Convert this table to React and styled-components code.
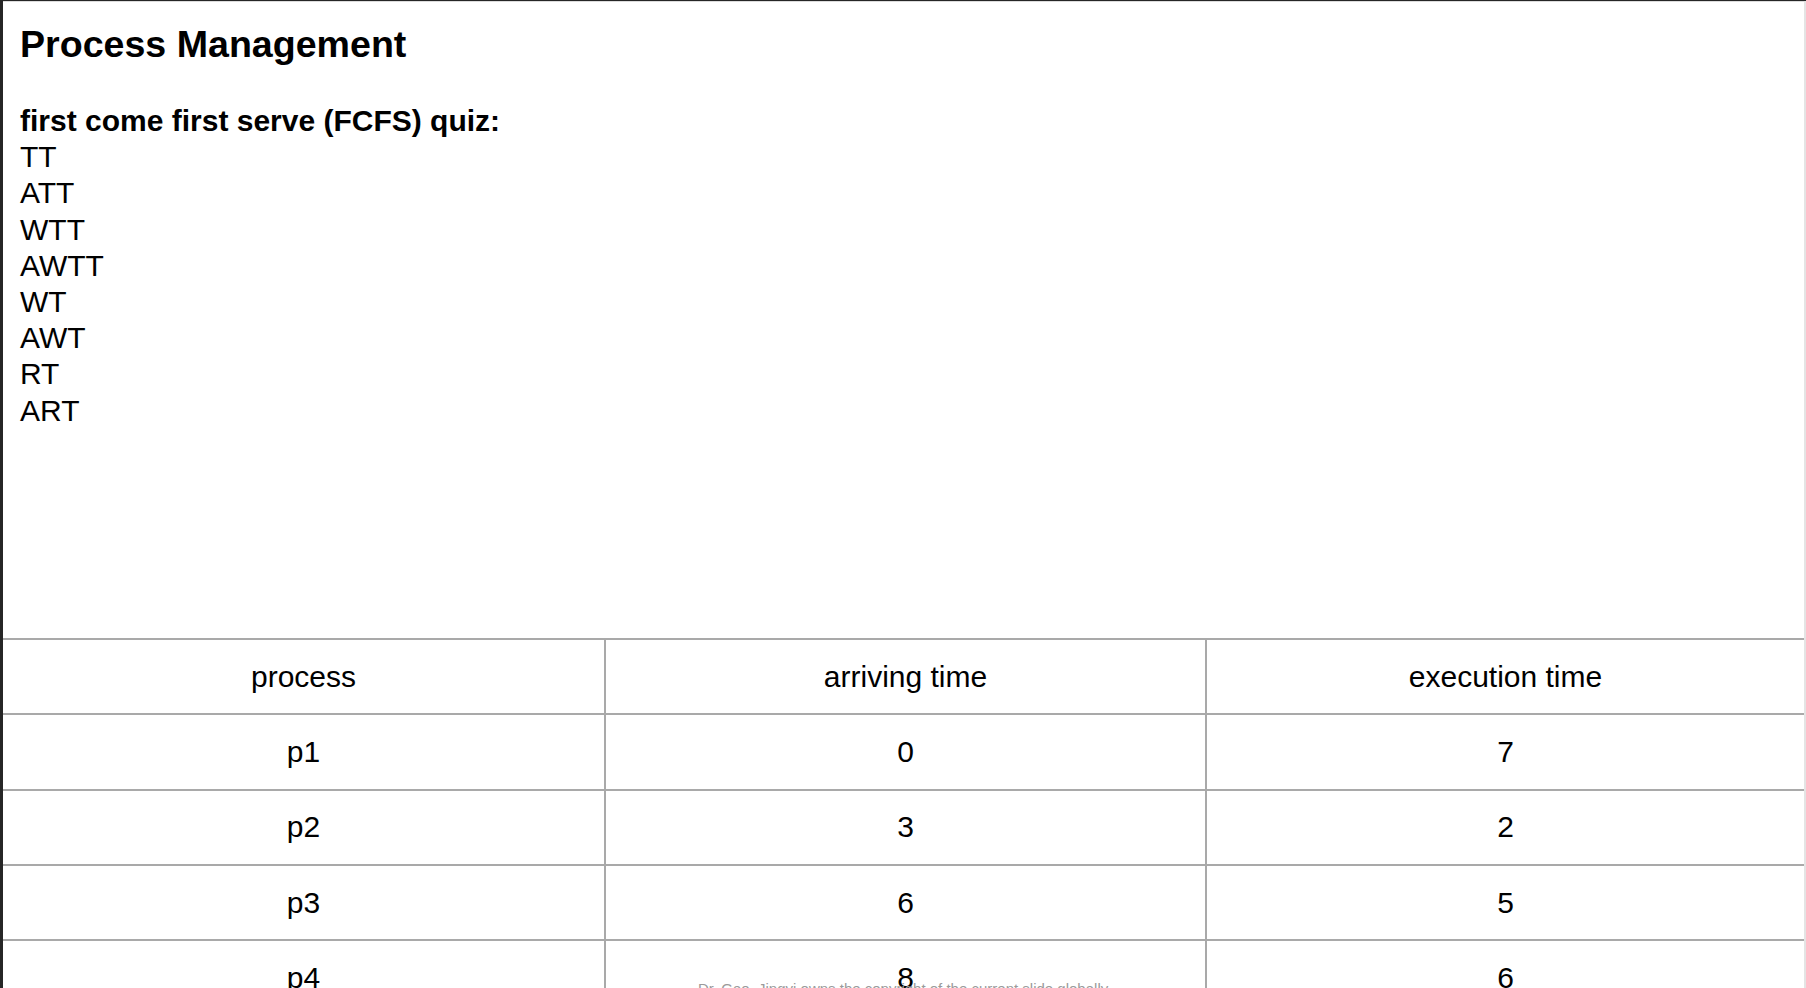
import React from 'react';
import styled, { createGlobalStyle } from 'styled-components';

const GlobalStyle = createGlobalStyle`
  html, body {
    margin: 0;
    padding: 0;
    background: #ffffff;
    overflow: hidden;
  }
  body {
    font-family: "Liberation Sans", Arial, Helvetica, sans-serif;
    color: #000;
  }
`;

const rows = [
  { process: 'p1', arriving: '0', execution: '7' },
  { process: 'p2', arriving: '3', execution: '2' },
  { process: 'p3', arriving: '6', execution: '5' },
  { process: 'p4', arriving: '8', execution: '6' },
];

const terms = ['TT', 'ATT', 'WTT', 'AWTT', 'WT', 'AWT', 'RT', 'ART'];

const App = () => {
  return (
    <>
      <GlobalStyle />
      <Frame>
        <Slide>
          <TextArea>
            <Title>Process Management</Title>
            <Quiz>
              <QuizHeading>first come first serve (FCFS) quiz:</QuizHeading>
              {terms.map((t) => (
                <Term key={t}>{t}</Term>
              ))}
            </Quiz>
          </TextArea>
          <Table>
            <Cell first>process</Cell>
            <Cell>arriving time</Cell>
            <Cell>execution time</Cell>
            {rows.map((r) => (
              <React.Fragment key={r.process}>
                <Cell first>{r.process}</Cell>
                <Cell>{r.arriving}</Cell>
                <Cell>{r.execution}</Cell>
              </React.Fragment>
            ))}
          </Table>
          <Watermark>Dr. Gao, Jingyi owns the copyright of the current slide globally</Watermark>
        </Slide>
      </Frame>
    </>
  );
};

const Frame = styled.div`
  width: 1806px;
  height: 988px;
  box-sizing: border-box;
  background: #262626;
  padding: 1px 0 0 3px;
  overflow: hidden;
`;

const Slide = styled.div`
  position: relative;
  height: 100%;
  background: #ffffff;
  border-top: 1px solid #dcdcdc;
  border-right: 2px solid #e4e4e4;
  box-sizing: border-box;
  display: flex;
  flex-direction: column;
  overflow: hidden;
`;

const TextArea = styled.div`
  flex: 0 0 636px;
  padding: 20px 0 0 17px;
  box-sizing: border-box;
`;

const Title = styled.h1`
  margin: 0;
  font-size: 37.6px;
  font-weight: bold;
  line-height: 44px;
`;

const Quiz = styled.div`
  margin-top: 37px;
  font-size: 30px;
  line-height: 36.2px;
`;

const QuizHeading = styled.div`
  font-weight: bold;
`;

const Term = styled.div`
  font-weight: normal;
`;

const Table = styled.div`
  flex-shrink: 0;
  display: grid;
  grid-template-columns: 601px 601px 1fr;
  grid-auto-rows: 75.3px;
  border-top: 2px solid #a9a9a9;
`;

const Cell = styled.div`
  display: flex;
  align-items: center;
  justify-content: center;
  font-size: 30px;
  box-sizing: border-box;
  border-bottom: 2px solid #a9a9a9;
  border-left: ${({ first }) => (first ? 'none' : '2px solid #a9a9a9')};
`;

const Watermark = styled.div`
  position: absolute;
  top: 978px;
  left: 695px;
  font-size: 15px;
  color: #9a9a9a;
  white-space: nowrap;
`;

export default App;
